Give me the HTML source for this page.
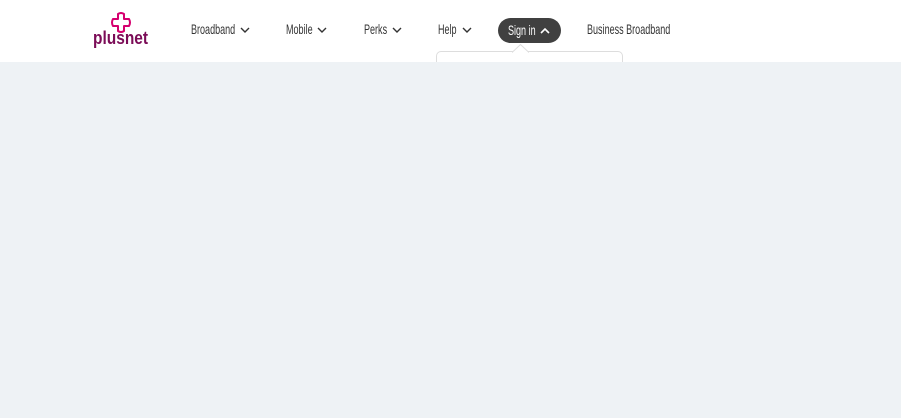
<!DOCTYPE html>
<html><head><meta charset="utf-8"><style>
body{margin:0;width:901px;height:418px;background:#eef2f5;overflow:hidden;font-family:"Liberation Sans",sans-serif;}
.hdr{position:absolute;left:0;top:0;width:901px;height:62px;background:#fff;}
.nav{position:absolute;top:21px;font-size:14px;color:#333;white-space:nowrap;line-height:17px}
.t{display:inline-block;transform:scaleX(0.645);transform-origin:0 0;}
.chev{position:absolute;top:6px}
.sign{position:absolute;left:498px;top:18px;width:63px;height:25px;border-radius:13px;background:#404040;color:#fff;font-size:14px;line-height:25px;}
.dd{position:absolute;left:436px;top:51px;width:185px;height:20px;border:1px solid #ddd;border-radius:5px;background:#fff;}
.logo{position:absolute;left:93px;top:28px;font-weight:bold;font-size:18px;color:#7b0c57;transform:scaleX(0.86);transform-origin:0 0}
</style></head><body>
<div class="hdr"></div>
<div class="dd"></div>
<svg style="position:absolute;left:512px;top:44px" width="17" height="9"><path d="M0 8.5 L8.5 0.5 L17 8.5" fill="#fff" stroke="#ddd"/></svg>
<div class="hdr" style="top:62px;height:356px;background:#eef2f5"></div>
<svg style="position:absolute;left:110px;top:12px" width="22" height="21" viewBox="0 0 22 21"><path d="M8 2 Q11 0 14 2 L14 7 L19 7 Q21 10.5 19 14 L14 14 L14 19 Q11 21 8 19 L8 14 L3 14 Q1 10.5 3 7 L8 7 Z" fill="none" stroke="#d5006f" stroke-width="2" stroke-linejoin="round"/></svg>
<div class="logo">plusnet</div>
<div class="nav" style="left:191px"><span class="t">Broadband</span><svg class="chev" style="left:49px" width="10" height="6"><path d="M1 1 L5 5 L9 1" fill="none" stroke="#333" stroke-width="1.4"/></svg></div>
<div class="nav" style="left:286px"><span class="t">Mobile</span><svg class="chev" style="left:31px" width="10" height="6"><path d="M1 1 L5 5 L9 1" fill="none" stroke="#333" stroke-width="1.4"/></svg></div>
<div class="nav" style="left:364px"><span class="t">Perks</span><svg class="chev" style="left:28px" width="10" height="6"><path d="M1 1 L5 5 L9 1" fill="none" stroke="#333" stroke-width="1.4"/></svg></div>
<div class="nav" style="left:438px"><span class="t">Help</span><svg class="chev" style="left:24px" width="10" height="6"><path d="M1 1 L5 5 L9 1" fill="none" stroke="#333" stroke-width="1.4"/></svg></div>
<div class="sign"><span class="t" style="position:absolute;left:10px">Sign in</span><svg style="position:absolute;left:42px;top:10px" width="10" height="6"><path d="M1 5 L5 1 L9 5" fill="none" stroke="#fff" stroke-width="1.6"/></svg></div>
<div class="nav" style="left:587px"><span class="t">Business Broadband</span></div>
</body></html>
